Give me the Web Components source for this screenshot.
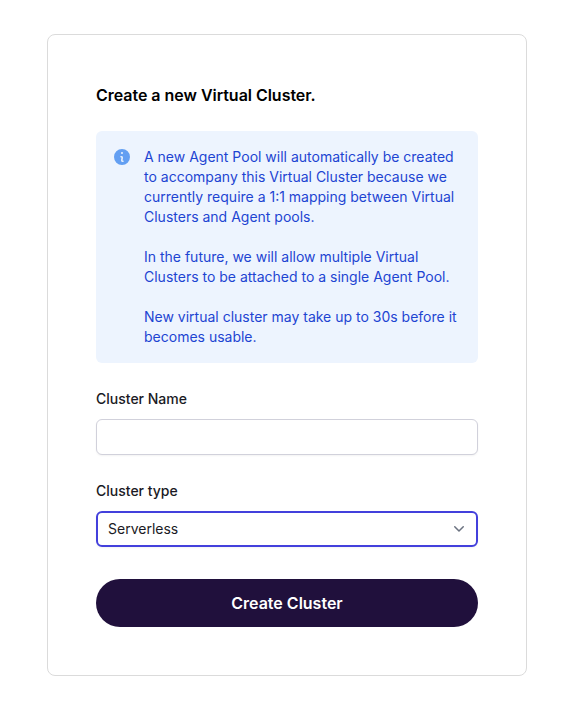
<!DOCTYPE html>
<html lang="en">
<head>
<meta charset="utf-8">
<title>Create a new Virtual Cluster</title>
<style>
  html, body { margin: 0; background: #fff; }
  body { font-family: Inter, "Liberation Sans", sans-serif; }
</style>
</head>
<body>
<template id="cluster-card-tpl">
  <style>
    :host { display: block; width: 480px; box-sizing: border-box; margin: 34px 0 0 47px; padding: 48px 48px 48px; background: #fff; border: 1px solid #dbdbdb; border-radius: 8px; }
    h2 { margin: 0 0 24px; font-size: 16px; line-height: 24px; font-weight: 600; color: #000; letter-spacing: -.03px; }
    .fields { display: flex; flex-direction: column; gap: 26px; margin-top: 26px; }
    .action { margin-top: 32px; }
  </style>
  <h2><slot name="heading"></slot></h2>
  <slot name="notice"></slot>
  <div class="fields"><slot name="field"></slot></div>
  <div class="action"><slot name="action"></slot></div>
</template>

<template id="info-notice-tpl">
  <style>
    :host { display: flex; gap: 12px; padding: 16px; background: #edf4fe; border-radius: 6px; color: #1d45d2; font-size: 14px; line-height: 20px; }
    svg { flex: none; width: 20px; height: 20px; display: block; }
    .body { flex: 1; min-width: 0; }
    ::slotted(p) { margin: 0 0 20px; }
    ::slotted(p:last-child) { margin-bottom: 0; }
  </style>
  <svg viewBox="0 0 20 20" aria-hidden="true">
    <path fill="#639ff2" fill-rule="evenodd" d="M18 10a8 8 0 1 1-16 0 8 8 0 0 1 16 0Zm-7-4a1 1 0 1 1-2 0 1 1 0 0 1 2 0ZM9 9a.75.75 0 0 0 0 1.5h.25a.25.25 0 0 1 .24.3l-.45 2.08A1.75 1.75 0 0 0 10.75 15H11a.75.75 0 0 0 0-1.5h-.25a.25.25 0 0 1-.24-.3l.45-2.08A1.75 1.75 0 0 0 9.25 9H9Z"/>
  </svg>
  <div class="body"><slot></slot></div>
</template>

<template id="form-field-tpl">
  <style>
    :host { display: block; }
    label { display: block; margin-bottom: 10px; font-size: 14px; line-height: 20px; font-weight: 500; color: #1a1a24; }
    .box { box-sizing: border-box; display: flex; align-items: center; justify-content: space-between; width: 100%; height: 36px; padding: 0 12px; background: #fff; border: 1px solid #d1d1db; border-radius: 6px; box-shadow: 0 1px 2px rgba(0,0,0,.05); font-size: 14px; line-height: 20px; color: #1a1a24; }
    :host([focused]) .box { border: 2px solid #4340dc; padding-left: 10px; padding-right: 7px; }
    svg { width: 20px; height: 20px; display: none; flex: none; }
    :host([select]) svg { display: block; }
  </style>
  <label><slot name="label"></slot></label>
  <div class="box">
    <span><slot></slot></span>
    <svg viewBox="0 0 20 20" fill="none" stroke="#6b7280" stroke-width="1.5" stroke-linecap="round" stroke-linejoin="round" aria-hidden="true"><path d="M5.75 7.75 10 12l4.25-4.25"/></svg>
  </div>
</template>

<template id="pill-button-tpl">
  <style>
    :host { display: block; }
    button { display: block; width: 100%; height: 48px; padding: 0; border: 0; border-radius: 24px; background: #20103c; color: #fff; font: 600 16px/24px Inter, "Liberation Sans", sans-serif; cursor: pointer; }
  </style>
  <button type="button"><slot></slot></button>
</template>

<cluster-card>
  <span slot="heading">Create a new Virtual Cluster.</span>
  <info-notice slot="notice">
    <p>A new Agent Pool will automatically be created to accompany this Virtual Cluster because we currently require a 1:1 mapping between Virtual Clusters and Agent pools.</p>
    <p>In the future, we will allow multiple Virtual Clusters to be attached to a single Agent Pool.</p>
    <p>New virtual cluster may take up to 30s before it becomes usable.</p>
  </info-notice>
  <form-field slot="field"><span slot="label">Cluster Name</span></form-field>
  <form-field slot="field" select focused><span slot="label">Cluster type</span>Serverless</form-field>
  <pill-button slot="action">Create Cluster</pill-button>
</cluster-card>

<script>
  // every element here is just a template stamped into an open shadow root
  const define = (name, tplId) => {
    customElements.define(name, class extends HTMLElement {
      constructor() {
        super();
        this.attachShadow({ mode: "open" }).appendChild(
          document.getElementById(tplId).content.cloneNode(true)
        );
      }
    });
  };
  define("cluster-card", "cluster-card-tpl");
  define("info-notice", "info-notice-tpl");
  define("form-field", "form-field-tpl");
  define("pill-button", "pill-button-tpl");
</script>
</body>
</html>
